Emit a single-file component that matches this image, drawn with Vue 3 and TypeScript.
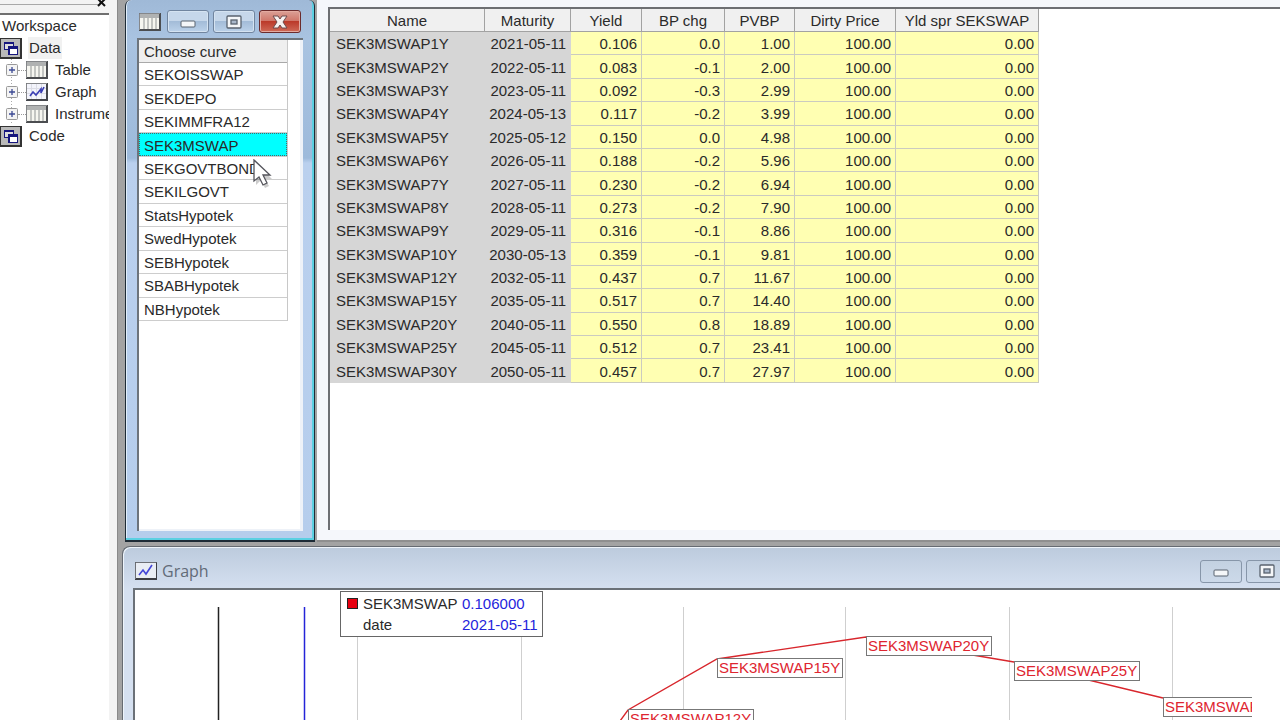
<script setup lang="ts">
import { ref } from 'vue'

type Quote = [name: string, maturity: string, yld: string, bp: string, pvbp: string]

const headings = ['Name', 'Maturity', 'Yield', 'BP chg', 'PVBP', 'Dirty Price', 'Yld spr SEKSWAP']

const quotes: Quote[] = [
  ['SEK3MSWAP1Y', '2021-05-11', '0.106', '0.0', '1.00'],
  ['SEK3MSWAP2Y', '2022-05-11', '0.083', '-0.1', '2.00'],
  ['SEK3MSWAP3Y', '2023-05-11', '0.092', '-0.3', '2.99'],
  ['SEK3MSWAP4Y', '2024-05-13', '0.117', '-0.2', '3.99'],
  ['SEK3MSWAP5Y', '2025-05-12', '0.150', '0.0', '4.98'],
  ['SEK3MSWAP6Y', '2026-05-11', '0.188', '-0.2', '5.96'],
  ['SEK3MSWAP7Y', '2027-05-11', '0.230', '-0.2', '6.94'],
  ['SEK3MSWAP8Y', '2028-05-11', '0.273', '-0.2', '7.90'],
  ['SEK3MSWAP9Y', '2029-05-11', '0.316', '-0.1', '8.86'],
  ['SEK3MSWAP10Y', '2030-05-13', '0.359', '-0.1', '9.81'],
  ['SEK3MSWAP12Y', '2032-05-11', '0.437', '0.7', '11.67'],
  ['SEK3MSWAP15Y', '2035-05-11', '0.517', '0.7', '14.40'],
  ['SEK3MSWAP20Y', '2040-05-11', '0.550', '0.8', '18.89'],
  ['SEK3MSWAP25Y', '2045-05-11', '0.512', '0.7', '23.41'],
  ['SEK3MSWAP30Y', '2050-05-11', '0.457', '0.7', '27.97'],
]

const curves = [
  'SEKOISSWAP', 'SEKDEPO', 'SEKIMMFRA12', 'SEK3MSWAP', 'SEKGOVTBOND', 'SEKILGOVT',
  'StatsHypotek', 'SwedHypotek', 'SEBHypotek', 'SBABHypotek', 'NBHypotek',
]
const selected = ref('SEK3MSWAP')

const branches = [
  { label: 'Table', icon: 'grid' },
  { label: 'Graph', icon: 'graph' },
  { label: 'Instrume', icon: 'grid' },
]

const gridLines = [222, 386, 548, 710, 874, 1037]
const points = [
  { label: 'SEK3MSWAP12Y', x: 493, y: 120 },
  { label: 'SEK3MSWAP15Y', x: 582, y: 69 },
  { label: 'SEK3MSWAP20Y', x: 731, y: 47 },
  { label: 'SEK3MSWAP25Y', x: 879, y: 72 },
  { label: 'SEK3MSWAP30Y', x: 1028, y: 108 },
]
const curveLine = '485,131 ' + points.map((p) => `${p.x},${p.y}`).join(' ')
</script>

<template>
  <div class="app">
    <svg class="defs" width="0" height="0" aria-hidden="true">
      <symbol id="i-grid" viewBox="0 0 22 18">
        <path d="M0 0h22v18H0z" fill="#4b4d50" />
        <path d="M1 1h19v15H1z" fill="#f6f6f0" />
        <path d="M1 1h19v4H1z" fill="#b0b2b2" />
        <path d="M5 5v11M9 5v11M13 5v11M17 5v11" stroke="#b3b5b3" stroke-width="1.500" />
        <path d="M.5 17V.5H21" fill="none" stroke="#85878a" />
      </symbol>
      <symbol id="i-graph" viewBox="0 0 22 18">
        <path d="M0 0h22v18H0z" fill="#44464b" />
        <path d="M1 1h19v15H1z" fill="#f3f4fb" />
        <path d="M5.500 1v15M10.500 1v15M15.500 1v15M1 5.500h19M1 10.500h19" stroke="#dcdde6" />
        <path d="M4 13l3-4 3 3 5-6v4l3-6" fill="none" stroke="#3a3eb4" stroke-width="1.600" />
        <path d="M.5 17V.5H21" fill="none" stroke="#85878a" />
      </symbol>
      <symbol id="i-graph-plain" viewBox="0 0 22 18">
        <path d="M0 0h22v18H0z" fill="#3c3e44" />
        <path d="M1 1h20v15H1z" fill="#e9edf4" />
        <path d="M4 13l4-5 3 4 6-9" fill="none" stroke="#4446d8" stroke-width="1.600" />
        <path d="M.5 17V.5H21.500" fill="none" stroke="#6d7076" />
      </symbol>
      <symbol id="i-node" viewBox="0 0 22 21">
        <path d="M0 0h22v21H0z" fill="#333" />
        <path d="M1 1h19v18H1z" fill="#b9b9b9" />
        <path d="M4 4h10v8H4z" fill="#16167e" />
        <path d="M5 6h8v5H5z" fill="#dcdcdc" />
        <path d="M8 8h10v9H8z" fill="#16167e" />
        <path d="M10 11h7v5h-7z" fill="#fff" />
      </symbol>
      <symbol id="i-min" viewBox="0 0 16 8">
        <rect x="1" y="1" width="14" height="6" rx="1" fill="#f4f6f8" stroke="#59636f" />
      </symbol>
      <symbol id="i-max" viewBox="0 0 16 14">
        <rect x="1" y="1" width="14" height="12" rx="1" fill="#f4f6f8" stroke="#59636f" stroke-width="1.300" />
        <rect x="5" y="5" width="6" height="4" fill="#a9b8cb" stroke="#59636f" stroke-width="1.300" />
      </symbol>
      <symbol id="i-close" viewBox="0 0 16 14">
        <path d="M1 1h5l2 3 2-3h5l-4 6 4 6h-5l-2-3-2 3H1l4-6z" fill="#f6f1f0" stroke="#6c4a4c" />
      </symbol>
    </svg>

    <aside class="side">
      <div class="side-bar">
        <span class="grip"></span>
        <button class="side-close" aria-label="Close workspace">
          <svg width="9" height="7" viewBox="0 0 9 7"><path d="M1-1l7 7M8-1L1 6" stroke="#111" stroke-width="2" /></svg>
        </button>
      </div>
      <nav class="tree">
        <div class="node title">Workspace</div>
        <div class="node">
          <svg width="22" height="21"><use href="#i-node" /></svg><span class="root-label lit">Data</span>
        </div>
        <div class="children">
          <div v-for="b in branches" :key="b.label" class="node child">
            <button class="expand" :aria-label="'Expand ' + b.label">
              <svg width="12" height="12" viewBox="0 0 12 12">
                <rect x=".5" y=".5" width="11" height="11" rx="1" fill="#f4f4f4" stroke="#999" />
                <path d="M3 6h6M6 3v6" stroke="#3c4a94" stroke-width="1.300" />
              </svg>
            </button>
            <i class="dots"></i>
            <svg width="22" height="18"><use :href="'#i-' + b.icon" /></svg>
            <span class="leaf">{{ b.label }}</span>
          </div>
        </div>
        <div class="node">
          <svg width="22" height="21"><use href="#i-node" /></svg><span class="root-label">Code</span>
        </div>
      </nav>
    </aside>

    <main class="desk">
      <div class="upper">
        <section class="chooser">
          <header class="caption">
            <svg class="cap-icon" width="22" height="18"><use href="#i-grid" /></svg>
            <button class="wbtn" aria-label="Minimize"><svg class="low" width="16" height="8"><use href="#i-min" /></svg></button>
            <button class="wbtn" aria-label="Maximize"><svg width="16" height="14"><use href="#i-max" /></svg></button>
            <button class="wbtn close" aria-label="Close"><svg width="16" height="14"><use href="#i-close" /></svg></button>
          </header>
          <div class="chooser-body">
            <div class="list">
              <h2>Choose curve</h2>
              <ul>
                <li v-for="c in curves" :key="c">
                  <button :class="{ on: c === selected }" @click="selected = c">{{ c }}</button>
                </li>
              </ul>
            </div>
          </div>
          <svg class="pointer" width="20" height="30" viewBox="0 0 20 30">
            <path d="M3 4v22l5-5 4 8 4-2-4-7h7z" fill="#000" opacity=".2" />
            <path d="M1 1v21l5-4 4 8 4-2-4-8h7z" fill="#fff" stroke="#55555c" stroke-width="1.300" />
          </svg>
        </section>

        <section class="quotes">
          <div class="quotes-body">
            <table>
              <colgroup>
                <col class="c-name" /><col class="c-mat" /><col class="c-yld" /><col class="c-bp" />
                <col class="c-pv" /><col class="c-dirty" /><col class="c-spr" />
              </colgroup>
              <thead>
                <tr><th v-for="h in headings" :key="h">{{ h }}</th></tr>
              </thead>
              <tbody>
                <tr v-for="q in quotes" :key="q[0]">
                  <td class="key left">{{ q[0] }}</td>
                  <td class="key">{{ q[1] }}</td>
                  <td>{{ q[2] }}</td>
                  <td>{{ q[3] }}</td>
                  <td>{{ q[4] }}</td>
                  <td>100.00</td>
                  <td>0.00</td>
                </tr>
              </tbody>
            </table>
          </div>
        </section>
      </div>

      <section class="graph">
        <header class="graph-cap">
          <svg width="22" height="18"><use href="#i-graph-plain" /></svg>
          <h2>Graph</h2>
          <div class="graph-btns">
            <button class="wbtn flat" aria-label="Minimize graph"><svg class="low" width="16" height="8"><use href="#i-min" /></svg></button>
            <button class="wbtn flat" aria-label="Maximize graph"><svg width="16" height="14"><use href="#i-max" /></svg></button>
          </div>
        </header>
        <div class="plot">
          <svg class="chart" role="img" aria-label="Swap curve">
            <path v-for="x in gridLines" :key="x" :d="`M${x}.5 17V900`" stroke="#cfcfcf" />
            <path d="M83.500 17V900" stroke="#222" stroke-width="1.500" />
            <path d="M169.500 17V900" stroke="#2424d8" stroke-width="1.500" />
            <polyline :points="curveLine" fill="none" stroke="#d8262c" stroke-width="1.400" />
            <g v-for="p in points" :key="p.label">
              <rect :x="p.x + 0.5" :y="p.y - 0.5" width="125" height="19" fill="#fff" stroke="#777" />
              <text :x="p.x + 2" :y="p.y + 14" class="tag">{{ p.label }}</text>
            </g>
          </svg>
          <dl class="legend">
            <dt><i class="swatch"></i>SEK3MSWAP</dt><dd>0.106000</dd>
            <dt>date</dt><dd>2021-05-11</dd>
          </dl>
        </div>
      </section>
    </main>
  </div>
</template>

<style>
body { margin: 0; }
</style>

<style scoped>
* { box-sizing: border-box; }
.app {
  display: flex;
  height: 100vh;
  overflow: hidden;
  background: #a3a3a3;
  color: #2a2a2a;
  font: 15px/22px "Liberation Sans", Arial, sans-serif;
}
.defs { position: absolute; }
svg { display: block; flex: none; }
button { padding: 0; border: 0; background: none; font: inherit; color: inherit; }
h2, ul, dl, dd { margin: 0; padding: 0; font: inherit; }

.side {
  flex: none;
  width: 118px;
  display: flex;
  flex-direction: column;
  padding-right: 8px;
  background: #f3f3f3;
  border-right: 1px solid #8a8a8a;
}
.side-bar { height: 13px; display: flex; justify-content: space-between; padding-right: 3px; }
.grip { width: 100px; height: 5px; margin-right: -3px; background: #f3f3f3; border: solid #a8a8a8; border-width: 0 1px 1px 0; }
.side-close { height: 7px; }
.tree { flex: 1; overflow: hidden; background: #fff; border-top: 2px solid #6f6f6f; white-space: nowrap; }
.node { height: 22px; display: flex; align-items: center; }
.title { padding-left: 2px; }
.root-label { margin-left: 6px; padding: 0 1px; }
.lit { background: #f1f1f1; }
.children { background: repeating-linear-gradient(#aaa 0 1px, transparent 1px 3px) 11px 0 / 1px 100% no-repeat; }
.child { padding-left: 6px; }
.expand { flex: none; }
.dots { flex: none; width: 8px; border-top: 1px dotted #999; }
.leaf { margin-left: 7px; }

.desk { flex: 1; min-width: 0; display: flex; flex-direction: column; }
.upper { height: 542px; flex: none; display: flex; gap: 2px; padding-left: 7px; }

.chooser {
  position: relative;
  flex: none;
  width: 190px;
  display: flex;
  flex-direction: column;
  padding: 10px 11px 9px 11px;
  background: linear-gradient(#9fb9d7, #a9c3e1 40px, #9dbadb 158px, #bad0ee 163px, #b5cdec);
  border: solid #1d2b36;
  border-width: 0 1px 2px;
  border-radius: 6px 6px 0 0;
  box-shadow: inset -2px -2px #5bd0e2, inset 1px 0 #e2effb;
}
.caption { height: 28px; display: flex; align-items: flex-start; gap: 4px; }
.cap-icon { margin: 3px 2px 0 2px; }
.wbtn {
  flex: none;
  width: 42px;
  height: 23px;
  display: flex;
  align-items: center;
  justify-content: center;
  border: 1px solid #71859f;
  border-radius: 3px;
  background: linear-gradient(#c6d7ea 50%, #a3bcd8 50%, #bcd2ea);
  box-shadow: inset 0 0 0 1px #d5e3f1;
}
.wbtn svg { overflow: visible; }
.wbtn .low { margin-top: 4px; }
.close {
  border-color: #6b2b2c;
  background: linear-gradient(#dba096, #cf7467 50%, #bb3a2a 50%, #cf6a58);
  box-shadow: inset 0 0 0 1px #e3aaa0;
}
.chooser-body { flex: 1; background: #fff; border: solid #6d747c; border-width: 2px 0 0 2px; box-shadow: inset -3px -2px #eef2f8; }
.list { width: 149px; height: 281px; display: flex; flex-direction: column; border-right: 1px solid #c8c8c8; }
.list h2 { flex: none; height: 23px; padding: 1px 0 0 5px; background: #efefef; border-bottom: 1px solid #a9a9a9; }
.list ul { flex: 1; min-height: 0; display: flex; flex-direction: column; list-style: none; }
.list li { flex: 1; min-height: 0; border-bottom: 1px solid #cdcdcd; }
.list button { display: block; width: 100%; height: 100%; padding: 2px 0 0 5px; line-height: 20px; text-align: left; }
.list .on { background: #0ff; outline: 1px dotted #47676a; outline-offset: -1px; }
.pointer { position: absolute; left: 127px; top: 159px; }

.quotes { flex: 1; min-width: 0; display: flex; padding: 7px 0 10px 11px; background: #f5f7fb; border-bottom: 2px solid #8f8f8f; }
.quotes-body { flex: 1; min-width: 0; overflow: hidden; background: #fff; border: solid #6d6f73; border-width: 2px 0 0 2px; }
table { table-layout: fixed; width: 709px; height: 374px; border-collapse: separate; border-spacing: 0; }
.c-name { width: 155px; }
.c-mat { width: 86px; }
.c-yld { width: 71px; }
.c-bp { width: 83px; }
.c-pv { width: 70px; }
.c-dirty { width: 101px; }
.c-spr { width: 143px; }
th { height: 23px; padding: 1px 0 0; line-height: 21px; font-weight: 400; background: #f0f0f0; border: solid #a2a2a2; border-width: 0 1px 1px 0; }
td { padding: 2px 4px 0 0; line-height: 20px; text-align: right; background: #ffffb2; border: solid #cbcbc0; border-width: 0 1px 1px 0; }
td.key { background: #d6d6d6; border-color: #d6d6d6; }
td.left { padding-left: 6px; text-align: left; }

.graph {
  flex: 1;
  min-height: 0;
  display: flex;
  flex-direction: column;
  margin: 4px 0 0 4px;
  padding-left: 10px;
  overflow: hidden;
  border: solid #666b72;
  border-width: 1px 0 0 1px;
  border-top-left-radius: 8px;
  background: linear-gradient(#bccbdd, #d5e0f0 42px);
  box-shadow: inset 1px 1px #eef4fa;
}
.graph-cap { flex: none; height: 41px; display: flex; align-items: center; gap: 5px; padding: 7px 0 0 2px; }
.graph-cap h2 { font: 16px/22px "Open Sans", "Noto Sans", sans-serif; color: #626b78; }
.graph-btns { display: flex; gap: 4px; margin-left: auto; margin-right: -8px; }
.flat { background: linear-gradient(#c3d1e1, #ccd9e9); border-color: #8796a9; box-shadow: none; }
.plot { position: relative; flex: 1; min-height: 0; background: #fff; border: solid #6b7178; border-width: 2px 0 0 2px; padding-right: 28px; }
.chart { width: 100%; height: 100%; overflow: hidden; }
.tag { font: 15px "Liberation Sans", Arial, sans-serif; fill: #de2530; }
.legend {
  position: absolute;
  left: 205px;
  top: 1px;
  display: grid;
  grid-template-columns: 115px 80px;
  padding: 1px 0 1px 6px;
  line-height: 21px;
  background: #fff;
  border: 1px solid #666;
}
.legend dt { display: flex; align-items: center; padding-left: 16px; }
.legend dt:first-child { padding-left: 0; }
.legend dd { color: #2424dc; }
.swatch { width: 11px; height: 11px; margin-right: 5px; background: #e80010; border: 1px solid #222; }
</style>
